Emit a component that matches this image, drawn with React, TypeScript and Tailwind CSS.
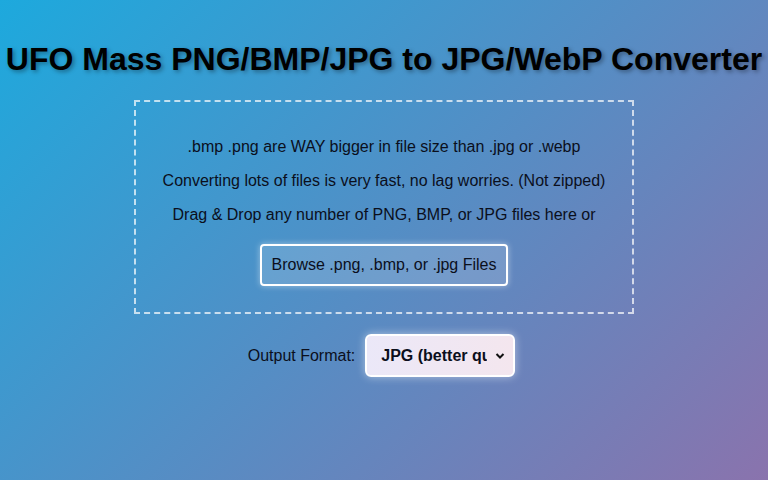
import React from "react";

export default function App() {
  return (
    <div
      className="min-h-[480px] w-full bg-[linear-gradient(135deg,#1da9dd,#8a73ad)] flex flex-col items-center text-[#0b0f1c] pt-[41px]"
      style={{ fontFamily: '"Liberation Sans", Arial, sans-serif' }}
    >
      <h1 className="text-[32px] font-bold leading-[37px] whitespace-nowrap text-black [text-shadow:2px_2px_4px_rgba(0,0,0,0.35)]">
        UFO Mass PNG/BMP/JPG to JPG/WebP Converter
      </h1>
      <div className="mt-[22px] w-[500px] h-[214px] border-2 border-dashed border-white/70 flex flex-col items-center pt-[36px] text-[16px] leading-[18px]">
        <p>.bmp .png are WAY bigger in file size than .jpg or .webp</p>
        <p className="mt-[16px]">Converting lots of files is very fast, no lag worries. (Not zipped)</p>
        <p className="mt-[16px]">Drag &amp; Drop any number of PNG, BMP, or JPG files here or</p>
        <button className="mt-[20px] h-[42px] px-[10px] border-2 border-white rounded-[4px] bg-white/15 text-[16px] leading-[18px] text-[#0b0f1c] shadow-[0_0_6px_rgba(255,255,255,0.45)]">
          Browse .png, .bmp, or .jpg Files
        </button>
      </div>
      <div className="mt-[20px] pr-[5px] flex items-center gap-[10px] text-[16px]">
        <span>Output Format:</span>
        <div className="relative w-[150px] h-[43px] rounded-[6px] border-2 border-white bg-gradient-to-r from-[#ebe8f8] to-[#f4e6ee] shadow-[0_0_8px_rgba(255,255,255,0.5)] flex items-center overflow-hidden">
          <span className="pl-[14px] font-bold whitespace-nowrap w-[120px] overflow-hidden">JPG (better quality)</span>
          <svg className="absolute right-[8px] top-[16px]" width="10" height="8" viewBox="0 0 10 8">
            <path d="M1.5 2 L5 5.5 L8.5 2" stroke="#111" strokeWidth="2" fill="none" />
          </svg>
        </div>
      </div>
    </div>
  );
}
